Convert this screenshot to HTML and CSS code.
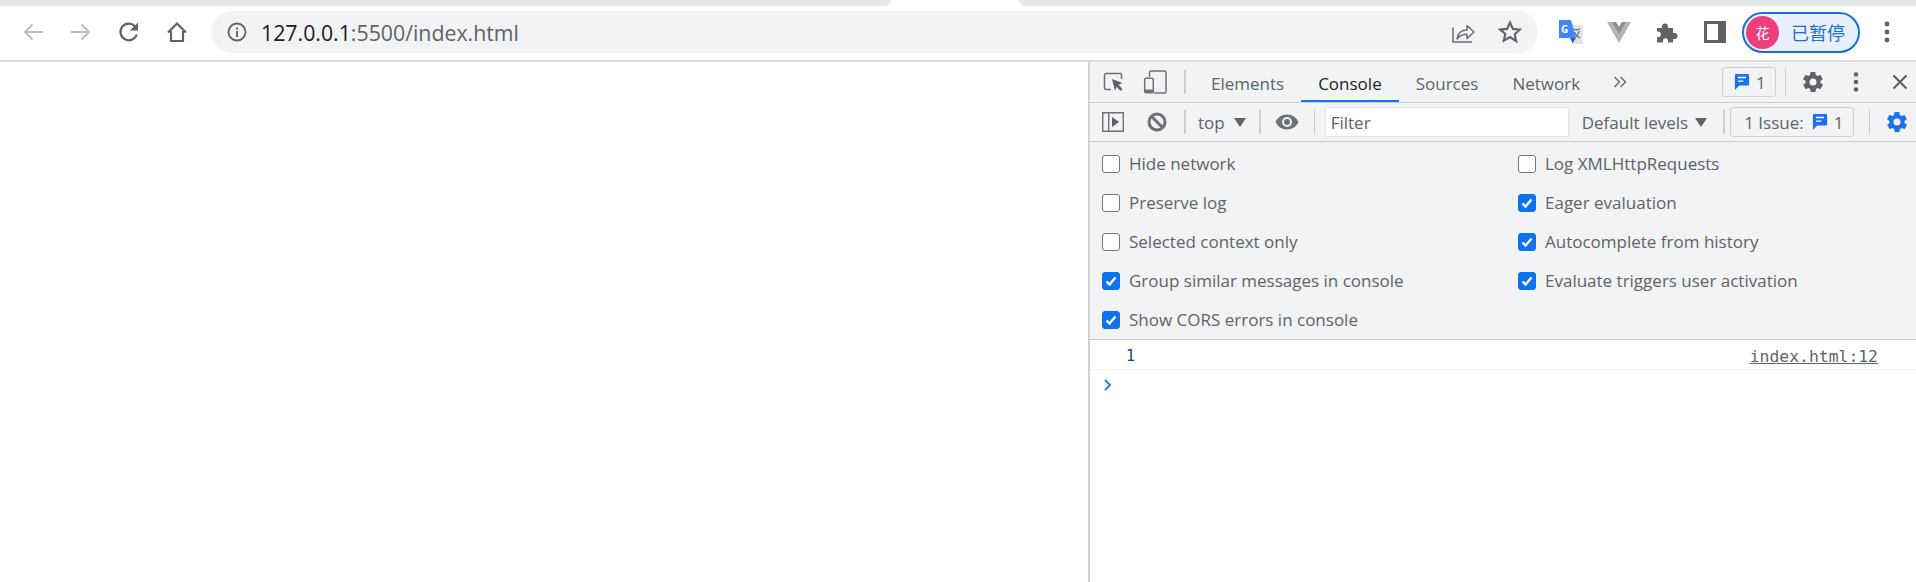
FILE: index.html
```html
<!DOCTYPE html>
<html lang="en">
<head>
<meta charset="utf-8">
<title>127.0.0.1:5500/index.html</title>
<link rel="stylesheet" href="styles.css">
</head>
<body>
<div class="tabstrip">
  <div class="strip-left"></div>
  <div class="strip-tab"></div>
  <div class="strip-right"></div>
</div>
<header class="chrome">
  <button class="nav"><svg width="24" height="24" viewBox="0 0 24 24"><path d="M22 12H4M11.500 4.500 4 12l7.500 7.500" fill="none" stroke="#bdc0c3" stroke-width="2"/></svg></button>
  <button class="nav"><svg width="24" height="24" viewBox="0 0 24 24"><path d="M2 12h18M12.500 4.500 20 12l-7.500 7.500" fill="none" stroke="#bdc0c3" stroke-width="2"/></svg></button>
  <button class="nav"><svg width="24" height="24" viewBox="0 0 24 24"><path d="M19.700 14.500A8.300 8.300 0 1 1 17.800 6.200" fill="none" stroke="#5f6368" stroke-width="2.200"/><path d="M21 2.500v8h-8z" fill="#5f6368"/></svg></button>
  <button class="nav"><svg width="24" height="24" viewBox="0 0 24 24"><path d="M3 12.500 12 3.500l9 9M6 11v10h12V11" fill="none" stroke="#5f6368" stroke-width="2.200"/></svg></button>
  <div class="omnibox">
    <svg class="info" width="20" height="20" viewBox="0 0 20 20"><circle cx="10" cy="10" r="8.500" fill="none" stroke="#5f6368" stroke-width="1.800"/><path d="M9 9h2v6H9zM9 5.500h2v2H9z" fill="#5f6368"/></svg>
    <div class="url"><span class="host">127.0.0.1</span>:5500/index.html</div>
    <button class="omni-btn"><svg width="24" height="24" viewBox="0 0 24 24"><path d="M2 7.500v14.500h19" fill="none" stroke="#6a6e72" stroke-width="1.500"/><path d="M6 19c1-6 5-9 10-9V5.500L23 12l-7 6.500v-4.200c-4 0-7 1-10 4.700z" fill="none" stroke="#6a6e72" stroke-width="1.500" stroke-linejoin="round"/></svg></button>
    <button class="omni-btn"><svg width="24" height="24" viewBox="0 0 24 24"><path d="M12 2.500l2.900 6.400 7 .7-5.200 4.700 1.500 6.900L12 17.100l-6.200 3.600 1.500-6.900L2.100 9.600l7-.7z" fill="none" stroke="#5f6368" stroke-width="2.100"/></svg></button>
  </div>
  <button class="ext"><svg width="26" height="26" viewBox="0 0 26 26"><path d="M13 6h11.500v19H15z" fill="#dfe1e3"/><path d="M15 10l3.500 1 3.500-1M18.500 10v1.500M21 12c-.5 3-2.500 6-5 7M16.500 13c1 2.500 3 5 5.500 6" fill="none" stroke="#5f7d8a" stroke-width="1.300"/><path d="M1 1h12l5 18H1z" fill="#4285f4"/><path d="M12 19l2.500 5.500 3.500-5.500z" fill="#2f62c8"/><text class="gt" x="6.500" y="13.500" text-anchor="middle">G</text></svg></button>
  <button class="ext"><svg width="26" height="24" viewBox="0 0 26 24"><path d="M1 2h9l3 5 3-5h9L13 23z" fill="#b4b5b6"/><path d="M6 2h4l3 5 3-5h4l-7 12z" fill="#8f9092"/></svg></button>
  <button class="ext"><svg width="24" height="24" viewBox="0 0 24 24"><path d="M2 8h5V6.500a3 3 0 0 1 6 0V8h5v5h1.500a3 3 0 0 1 0 6H18v3.500H13v-1.700a2.500 2.500 0 0 0-5 0v1.700H2V17h1a2.800 2.800 0 0 0 0-5.600H2z" fill="#5f6368"/></svg></button>
  <button class="ext"><svg width="22" height="22" viewBox="0 0 22 22"><path d="M0 0h22v22H0zM3 3v16h11V3z" fill="#5f6368" fill-rule="evenodd"/></svg></button>
  <div class="profile">
    <span class="avatar">花</span>
    <span class="paused">已暂停</span>
  </div>
  <button class="ext"><svg width="6" height="22" viewBox="0 0 6 22"><circle cx="3" cy="3" r="2.400" fill="#5f6368"/><circle cx="3" cy="11" r="2.400" fill="#5f6368"/><circle cx="3" cy="19" r="2.400" fill="#5f6368"/></svg></button>
</header>
<main class="workspace">
  <div class="page"></div>
  <section class="devtools">
    <div class="tabs-bar">
      <button class="dt-icon w-inspect"><svg width="22" height="22" viewBox="0 0 22 22"><path d="M8 18.500H3a1.500 1.500 0 0 1-1.500-1.500V4A1.500 1.500 0 0 1 3 2.500h14A1.500 1.500 0 0 1 18.500 4v4" fill="none" stroke="#6e7175" stroke-width="1.500"/><path d="M9 8l10.500 4-4 1.800 4 4.200-2 2-4-4.200L12 20z" fill="#5f6368"/></svg></button>
      <button class="dt-icon w-device"><svg width="24" height="24" viewBox="0 0 24 24"><path d="M6.500 7V2.500A1.500 1.500 0 0 1 8 1h13.500A1.500 1.500 0 0 1 23 2.500V22a1 1 0 0 1-1 1H11" fill="none" stroke="#6e7175" stroke-width="1.500"/><rect x="1.700" y="8.200" width="8.600" height="14.600" rx="1.300" fill="none" stroke="#6e7175" stroke-width="1.500"/><path d="M2 19.500h8V22H2z" fill="#6e7175"/></svg></button>
      <span class="sep sep-a"></span>
      <nav class="tabs">
        <span class="tab">Elements</span>
        <span class="tab active">Console</span>
        <span class="tab">Sources</span>
        <span class="tab">Network</span>
      </nav>
      <svg class="more" width="14" height="12" viewBox="0 0 14 12"><path d="M1.500 1l5 5-5 5M7.500 1l5 5-5 5" fill="none" stroke="#6e7175" stroke-width="1.600"/></svg>
      <span class="counter"><svg class="msg" width="16" height="18" viewBox="0 0 18 20"><path d="M2.500 1h13A1.500 1.500 0 0 1 17 2.500v10a1.500 1.500 0 0 1-1.500 1.500H6l-5 5V2.500A1.500 1.500 0 0 1 2.500 1z" fill="#1a73e8"/><path d="M4.500 5h9M4.500 9h6" stroke="#fff" stroke-width="1.600"/></svg>1</span>
      <span class="sep sep-b"></span>
      <button class="dt-icon w-gear"><svg width="24" height="24" viewBox="0 0 24 24"><path d="M19.400 13c.1-.3.1-.7.1-1s0-.7-.1-1l2.100-1.600c.2-.2.300-.4.100-.7l-2-3.500c-.1-.2-.4-.3-.6-.2l-2.500 1c-.5-.4-1.100-.7-1.700-1l-.4-2.600c0-.2-.2-.4-.5-.4h-4c-.3 0-.5.200-.5.400l-.4 2.600c-.6.300-1.200.6-1.700 1l-2.500-1c-.2-.1-.5 0-.6.200l-2 3.500c-.2.300-.1.500.1.700L4.600 11c-.1.300-.1.700-.1 1s0 .7.100 1l-2.100 1.600c-.2.200-.3.400-.1.700l2 3.500c.1.200.4.300.6.200l2.500-1c.5.400 1.100.7 1.700 1l.4 2.600c0 .2.200.4.500.4h4c.3 0 .5-.2.500-.4l.4-2.600c.6-.3 1.200-.6 1.700-1l2.500 1c.2.100.5 0 .6-.2l2-3.500c.2-.3.100-.5-.1-.7zM12 15.500a3.500 3.500 0 1 1 0-7 3.500 3.500 0 0 1 0 7z" fill="#5f6368"/></svg></button>
      <button class="dt-icon w-dots"><svg width="6" height="20" viewBox="0 0 6 20"><circle cx="3" cy="2.500" r="2.300" fill="#5f6368"/><circle cx="3" cy="10" r="2.300" fill="#5f6368"/><circle cx="3" cy="17.500" r="2.300" fill="#5f6368"/></svg></button>
      <button class="dt-icon w-close"><svg width="16" height="16" viewBox="0 0 16 16"><path d="M1.500 1.500l13 13M14.500 1.500l-13 13" stroke="#5f6368" stroke-width="2.200"/></svg></button>
    </div>
    <div class="filter-bar">
      <button class="dt-icon w-side"><svg width="22" height="20" viewBox="0 0 22 20"><path d="M.75 .75h20.500v18.500H.75zM6.750 .75v18.500" fill="none" stroke="#6e7175" stroke-width="1.400"/><path d="M10 5l7 5-7 5z" fill="#5f6368"/></svg></button>
      <button class="dt-icon w-block"><svg width="20" height="20" viewBox="0 0 20 20"><circle cx="10" cy="10" r="8" fill="none" stroke="#6e7175" stroke-width="3"/><path d="M4.500 4.500l11 11" stroke="#6e7175" stroke-width="3"/></svg></button>
      <span class="sep sep-c"></span>
      <span class="context">top</span>
      <span class="tri tri-top"></span>
      <span class="sep sep-d"></span>
      <button class="dt-icon w-eye"><svg width="24" height="16" viewBox="0 0 24 16"><path d="M12 .5C6.800.5 2.400 3.600.5 8c1.900 4.400 6.300 7.500 11.500 7.500S21.600 12.400 23.500 8C21.600 3.600 17.200.5 12 .5zm0 12.500a5 5 0 1 1 0-10 5 5 0 0 1 0 10zm0-8a3 3 0 1 0 0 6 3 3 0 0 0 0-6z" fill="#6e7175"/></svg></button>
      <span class="sep sep-e"></span>
      <div class="filter">Filter</div>
      <span class="levels">Default levels</span>
      <span class="tri tri-levels"></span>
      <span class="sep sep-f"></span>
      <span class="issues">1 Issue:<svg class="msg" width="16" height="18" viewBox="0 0 18 20"><path d="M2.500 1h13A1.500 1.500 0 0 1 17 2.500v10a1.500 1.500 0 0 1-1.500 1.500H6l-5 5V2.500A1.500 1.500 0 0 1 2.500 1z" fill="#1a73e8"/><path d="M4.500 5h9M4.500 9h6" stroke="#fff" stroke-width="1.600"/></svg>1</span>
      <span class="sep sep-g"></span>
      <button class="dt-icon w-gear2"><svg width="24" height="24" viewBox="0 0 24 24"><path d="M19.400 13c.1-.3.1-.7.1-1s0-.7-.1-1l2.100-1.600c.2-.2.300-.4.100-.7l-2-3.500c-.1-.2-.4-.3-.6-.2l-2.500 1c-.5-.4-1.100-.7-1.700-1l-.4-2.600c0-.2-.2-.4-.5-.4h-4c-.3 0-.5.200-.5.400l-.4 2.600c-.6.300-1.200.6-1.700 1l-2.500-1c-.2-.1-.5 0-.6.200l-2 3.500c-.2.300-.1.500.1.700L4.600 11c-.1.300-.1.700-.1 1s0 .7.100 1l-2.100 1.600c-.2.200-.3.400-.1.700l2 3.500c.1.200.4.300.6.200l2.500-1c.5.400 1.100.7 1.700 1l.4 2.600c0 .2.200.4.500.4h4c.3 0 .5-.2.500-.4l.4-2.600c.6-.3 1.200-.6 1.700-1l2.500 1c.2.100.5 0 .6-.2l2-3.500c.2-.3.100-.5-.1-.7zM12 15.500a3.500 3.500 0 1 1 0-7 3.500 3.500 0 0 1 0 7z" fill="#1a73e8"/></svg></button>
    </div>
    <div class="settings">
      <label class="opt"><span class="box"></span>Hide network</label>
      <label class="opt"><span class="box"></span>Log XMLHttpRequests</label>
      <label class="opt"><span class="box"></span>Preserve log</label>
      <label class="opt"><span class="box on"><svg width="14" height="14" viewBox="0 0 14 14"><path d="M2.500 7.500l3 3 6-7" fill="none" stroke="#fff" stroke-width="2.400"/></svg></span>Eager evaluation</label>
      <label class="opt"><span class="box"></span>Selected context only</label>
      <label class="opt"><span class="box on"><svg width="14" height="14" viewBox="0 0 14 14"><path d="M2.500 7.500l3 3 6-7" fill="none" stroke="#fff" stroke-width="2.400"/></svg></span>Autocomplete from history</label>
      <label class="opt"><span class="box on"><svg width="14" height="14" viewBox="0 0 14 14"><path d="M2.500 7.500l3 3 6-7" fill="none" stroke="#fff" stroke-width="2.400"/></svg></span>Group similar messages in console</label>
      <label class="opt"><span class="box on"><svg width="14" height="14" viewBox="0 0 14 14"><path d="M2.500 7.500l3 3 6-7" fill="none" stroke="#fff" stroke-width="2.400"/></svg></span>Evaluate triggers user activation</label>
      <label class="opt"><span class="box on"><svg width="14" height="14" viewBox="0 0 14 14"><path d="M2.500 7.500l3 3 6-7" fill="none" stroke="#fff" stroke-width="2.400"/></svg></span>Show CORS errors in console</label>
    </div>
    <div class="log-row">
      <span class="log-value">1</span>
      <a class="log-link">index.html:12</a>
    </div>
    <div class="prompt"><svg width="10" height="12" viewBox="0 0 10 12"><path d="M2 1l5 5-5 5" fill="none" stroke="#3b78e7" stroke-width="2"/></svg></div>
  </section>
</main>
</body>
</html>
```
FILE: styles.css
```css
* { box-sizing: border-box; }
html, body { margin: 0; height: 100%; }
body {
  display: flex;
  flex-direction: column;
  height: 582px;
  overflow: hidden;
  background: #fff;
  font-family: "Open Sans", "Noto Sans", sans-serif;
}
button {
  border: 0;
  padding: 0;
  background: none;
  display: flex;
  align-items: center;
  justify-content: center;
  height: 100%;
  flex: none;
}

.tabstrip { display: flex; height: 6px; flex: none; }
.strip-left { width: 891px; background: #e6e9ec; border-bottom-right-radius: 6px; }
.strip-tab { width: 128px; background: #fff; }
.strip-right { flex: 1; background: #e6e9ec; border-bottom-left-radius: 6px; }

.chrome {
  display: flex;
  align-items: center;
  flex: none;
  height: 56px;
  padding: 0 5px 2px 9px;
  border-bottom: 2px solid #dadce0;
}
.nav { width: 48px; }
.omnibox {
  flex: 1;
  display: flex;
  align-items: center;
  height: 42px;
  margin: 0 9px 0 10px;
  padding: 0 5px 0 16px;
  border-radius: 21px;
  background: #f1f3f4;
}
.info { flex: none; margin-right: 14px; }
.url { flex: 1; font-size: 21.300px; color: #5f6368; }
.host { color: #202124; }
.omni-btn { width: 47px; }
.ext { width: 48px; }
.gt { font: 700 10px "Open Sans", sans-serif; fill: #fff; }
.profile {
  display: flex;
  align-items: center;
  flex: none;
  width: 118px;
  height: 41px;
  margin: 0 3px;
  padding-left: 2px;
  border: 2px solid #1a6ed8;
  border-radius: 21px;
  background: #e8f0fe;
}
.avatar {
  width: 33px;
  height: 33px;
  border-radius: 50%;
  background: #ec407a;
  color: #fff;
  font: 14px/33px "Noto Sans CJK SC", sans-serif;
  text-align: center;
}
.paused {
  margin-left: 12px;
  font: 18px "Noto Sans CJK SC", sans-serif;
  color: #1a6ed8;
}

.workspace { flex: 1; display: flex; min-height: 0; }
.page { width: 1088px; flex: none; background: #fff; }
.devtools {
  flex: 1;
  display: flex;
  flex-direction: column;
  min-width: 0;
  border-left: 2px solid #d0d2d5;
  font-size: 17px;
  color: #5f6368;
}
.dt-icon { height: 100%; }

.tabs-bar, .filter-bar {
  display: flex;
  align-items: center;
  flex: none;
  white-space: nowrap;
  background: #f1f3f4;
  border-bottom: 1px solid #cbcdd1;
}
.tabs-bar { height: 41px; }
.filter-bar { height: 39px; }

.w-inspect { width: 48px; }
.w-device { width: 34px; }
.sep { flex: none; width: 2px; height: 24px; background: #ccced2; }
.sep-a { margin-left: 12px; }
.tabs { display: flex; flex: none; height: 100%; margin-left: 8px; }
.tab {
  display: flex;
  align-items: center;
  padding: 2px 17px 0;
  font-size: 17px;
  color: #5f6368;
}
.tab.active {
  color: #202124;
  box-shadow: inset 0 -2px 0 #1a73e8;
}
.more { flex: none; margin-left: 16px; }
.counter, .issues {
  display: flex;
  align-items: center;
  flex: none;
  height: 30px;
  border: 1px solid #d0d2d5;
  border-radius: 3px;
  font-size: 17px;
}
.counter { width: 54px; margin-left: 95px; padding-left: 11px; }
.msg { flex: none; margin-right: 6px; }
.sep-b { width: 1px; height: 28px; margin-left: 9px; }
.w-gear { width: 54px; }
.w-dots { width: 32px; }
.w-close { width: 44px; padding-left: 12px; }

.w-side { width: 46px; }
.w-block { width: 42px; }
.sep-c { margin-left: 6px; }
.context { flex: none; margin-left: 12px; }
.tri {
  flex: none;
  width: 0;
  height: 0;
  border-left: 6px solid transparent;
  border-right: 6px solid transparent;
  border-top: 9px solid #5f6368;
}
.tri-top { margin-left: 9px; }
.sep-d { margin-left: 13px; }
.w-eye { width: 52px; }
.sep-e { width: 1px; margin-left: 1px; }
.filter {
  flex: none;
  width: 244px;
  height: 30px;
  margin-left: 10px;
  padding-left: 5px;
  background: #fff;
  border: 1px solid #e3e5e8;
  font-size: 17px;
  line-height: 29px;
  color: #5f6368;
}
.levels { flex: none; margin-left: 13px; }
.tri-levels { margin-left: 7px; }
.sep-f { margin-left: 16px; }
.issues { width: 124px; margin-left: 5px; padding-left: 13px; }
.issues .msg { margin-left: 8px; }
.sep-g { width: 1px; margin-left: 15px; }
.w-gear2 { width: 54px; }

.settings {
  flex: none;
  display: grid;
  grid-template-columns: 416px 1fr;
  grid-auto-rows: 39px;
  align-items: center;
  height: 198px;
  padding: 2px 0 0 12px;
  background: #f1f3f4;
  border-bottom: 1px solid #cbcdd1;
}
.opt { display: flex; align-items: center; font-size: 17px; color: #5f6368; }
.box {
  display: flex;
  align-items: center;
  justify-content: center;
  flex: none;
  width: 18px;
  height: 18px;
  margin-right: 9px;
  border: 1.500px solid #767676;
  border-radius: 3px;
  background: #fff;
}
.box.on { background: #0b72f0; border-color: #0b72f0; }

.log-row {
  display: flex;
  align-items: center;
  justify-content: space-between;
  flex: none;
  height: 30px;
  padding: 3px 38px 0 36px;
  border-bottom: 1px solid #f0f0f0;
  font: 16.400px "DejaVu Sans Mono", monospace;
}
.log-value { color: #1c3f7c; font-size: 15px; }
.log-link { color: #5f6368; text-decoration: underline; }
.prompt { display: flex; align-items: center; height: 30px; padding-left: 13px; }
```
